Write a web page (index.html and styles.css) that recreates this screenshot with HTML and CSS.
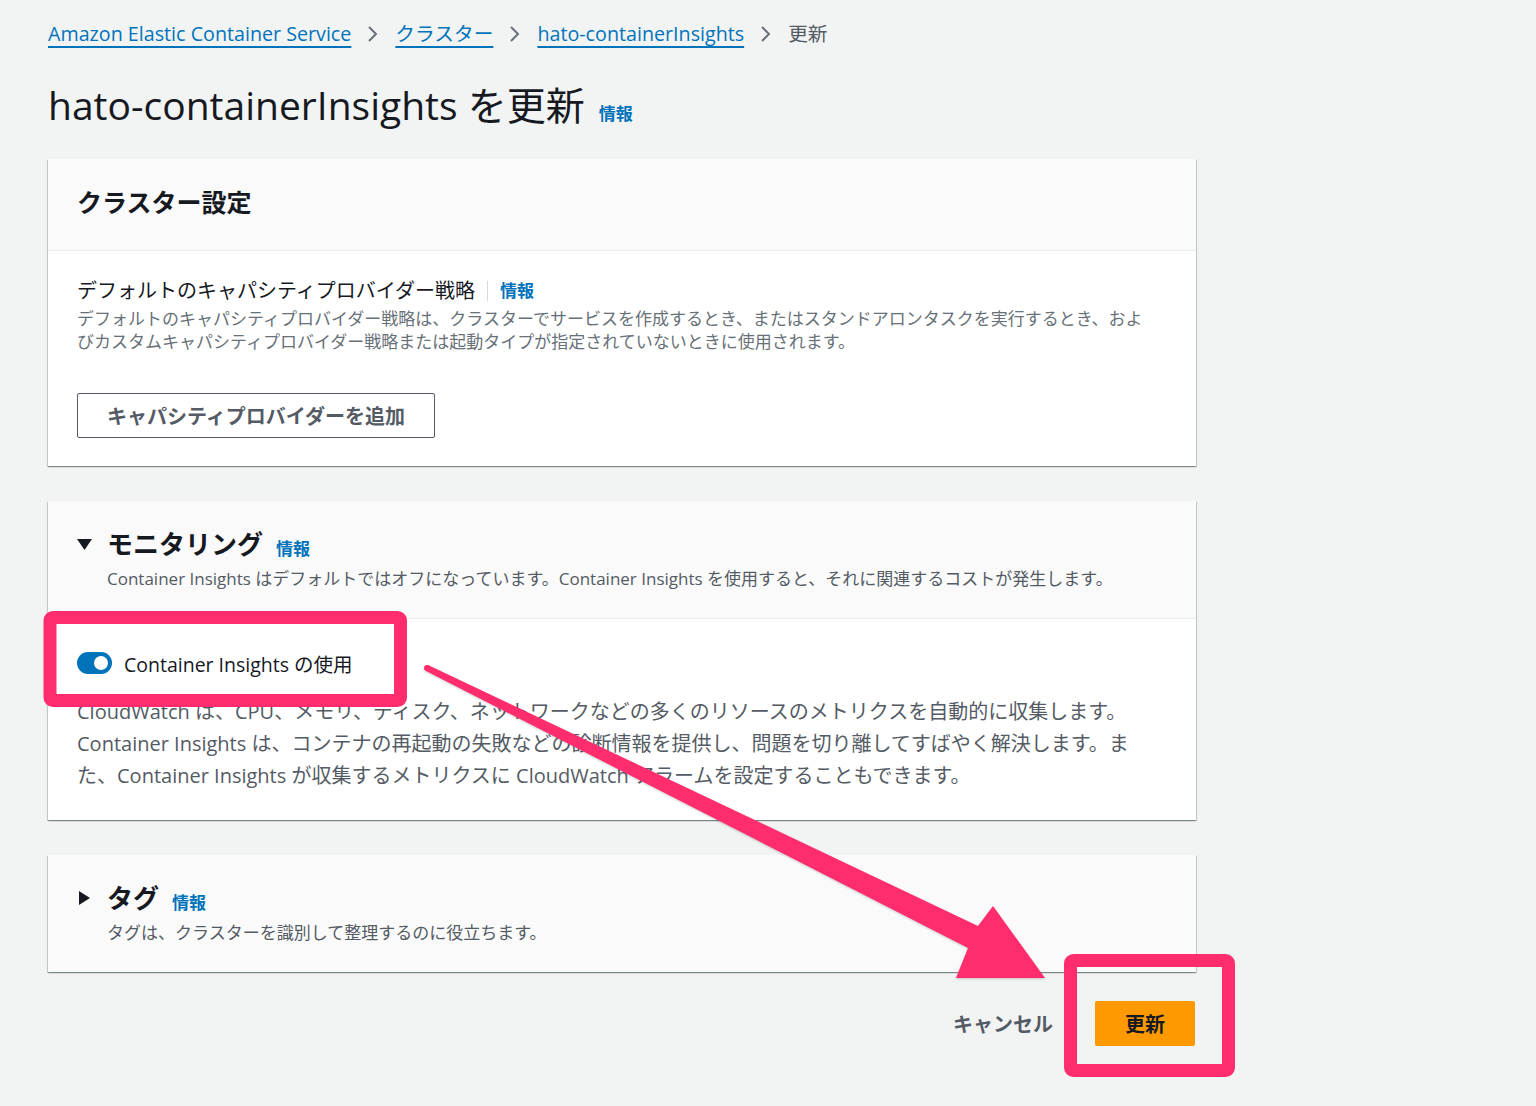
FILE: index.html
```html
<!DOCTYPE html>
<html lang="ja">
<head>
<meta charset="UTF-8">
<title>hato-containerInsights を更新</title>
<link rel="stylesheet" href="styles.css">
</head>
<body>
<div class="page">
	<!-- パンくず -->
	<nav class="crumbs">
		<a href="#">Amazon Elastic Container Service</a>
		<span class="sep"><svg width="13" height="18" viewBox="0 0 13 18"><path d="M3 2l7 7-7 7" fill="none" stroke="#687078" stroke-width="2"/></svg></span>
		<a href="#">クラスター</a>
		<span class="sep"><svg width="13" height="18" viewBox="0 0 13 18"><path d="M3 2l7 7-7 7" fill="none" stroke="#687078" stroke-width="2"/></svg></span>
		<a href="#">hato-containerInsights</a>
		<span class="sep"><svg width="13" height="18" viewBox="0 0 13 18"><path d="M3 2l7 7-7 7" fill="none" stroke="#687078" stroke-width="2"/></svg></span>
		<span class="current">更新</span>
	</nav>

	<h1 class="title">hato-containerInsights を更新 <a class="info" href="#">情報</a></h1>

	<!-- クラスター設定 -->
	<section class="card">
		<div class="card-head">
			<h2>クラスター設定</h2>
		</div>
		<div class="card-body">
			<div class="field-label">デフォルトのキャパシティプロバイダー戦略<span class="bar"></span><a class="info" href="#">情報</a></div>
			<p class="field-desc">デフォルトのキャパシティプロバイダー戦略は、クラスターでサービスを作成するとき、またはスタンドアロンタスクを実行するとき、およびカスタムキャパシティプロバイダー戦略または起動タイプが指定されていないときに使用されます。</p>
			<button class="btn" type="button">キャパシティプロバイダーを追加</button>
		</div>
	</section>

	<!-- モニタリング -->
	<section class="card">
		<div class="card-head expand">
			<div class="expand-title">
				<svg class="caret" width="15" height="12" viewBox="0 0 15 12"><polygon points="0,1 15,1 7.5,12" fill="#16191f"/></svg>
				<h2>モニタリング</h2>
				<a class="info" href="#">情報</a>
			</div>
			<p class="head-desc">Container Insights はデフォルトではオフになっています。Container Insights を使用すると、それに関連するコストが発生します。</p>
		</div>
		<div class="card-body monitor">
			<label class="switch-row">
				<span class="switch"><span class="knob"></span></span>
				Container Insights の使用
			</label>
			<p class="switch-desc">CloudWatch は、CPU、メモリ、ディスク、ネットワークなどの多くのリソースのメトリクスを自動的に収集します。Container Insights は、コンテナの再起動の失敗などの診断情報を提供し、問題を切り離してすばやく解決します。また、Container Insights が収集するメトリクスに CloudWatch アラームを設定することもできます。</p>
		</div>
	</section>

	<!-- タグ -->
	<section class="card">
		<div class="card-head expand closed">
			<div class="expand-title">
				<svg class="caret" width="15" height="14" viewBox="0 0 15 14"><polygon points="2,0 13,7 2,14" fill="#16191f"/></svg>
				<h2>タグ</h2>
				<a class="info" href="#">情報</a>
			</div>
			<p class="head-desc">タグは、クラスターを識別して整理するのに役立ちます。</p>
		</div>
	</section>

	<div class="actions">
		<button class="cancel" type="button">キャンセル</button>
		<button class="primary" type="button">更新</button>
	</div>

	<!-- 注釈（ピンクの枠と矢印） -->
	<svg class="marks" width="1536" height="1106" viewBox="0 0 1536 1106">
		<g fill="none" stroke="#ff2d6d" stroke-width="13" stroke-linejoin="round">
			<rect x="50" y="617.5" width="350.5" height="83" rx="3"/>
			<rect x="1070.5" y="960.5" width="158" height="110" rx="3"/>
		</g>
		<g fill="#ff2d6d" class="arrow">
			<circle cx="427" cy="668" r="3"/>
			<polygon points="428,665 978,926 993,906 1045,978 956,978 968,948 426,671"/>
		</g>
	</svg>
</div>
</body>
</html>
```

FILE: styles.css
```css
body {
	margin: 0;
	background-color: #f2f3f3;
	font-family: "Open Sans", "Noto Sans CJK JP", sans-serif;
	color: #16191f;
}

.page {
	position: relative;
	width: 1148px;
	min-height: 1040px;
	padding: 21px 48px 45px;
}

/* パンくず */
.crumbs {
	display: flex;
	align-items: center;
	font-size: 19.7px;
	line-height: 26px;
}

.crumbs a {
	color: #0073bb;
	text-decoration: underline;
	text-decoration-thickness: 2px;
	text-underline-offset: 5px;
}

.sep {
	display: flex;
	margin: 0 16px 0 15px;
}

.current {
	color: #545b64;
}

.title {
	margin: 34px 0 21px;
	font-size: 39px;
	font-weight: 400;
	line-height: 48px;
}

.info {
	color: #0073bb;
	font-size: 17px;
	font-weight: 700;
	text-decoration: none;
}

.title .info {
	margin-left: 4px;
}

/* カード */
.card {
	background-color: #fff;
	box-shadow: 0 1px 1px 0 rgba(0, 28, 36, 0.3), 1px 1px 1px 0 rgba(0, 28, 36, 0.15), -1px 1px 1px 0 rgba(0, 28, 36, 0.15);
	margin-bottom: 35px;
}

.card-head {
	background-color: #fafafa;
	border-bottom: 1px solid #eaeded;
	padding: 24px 29px 29px;
}

.card-head h2 {
	margin: 0;
	font-size: 25px;
	font-weight: 700;
	line-height: 38px;
}

.card-body {
	padding: 26px 29px 28px;
}

.field-label {
	display: flex;
	align-items: center;
	font-size: 20px;
	line-height: 28px;
}

.bar {
	width: 1px;
	height: 20px;
	background-color: #d5dbdb;
	margin: 0 12px;
}

.field-desc {
	max-width: 1082px;
	margin: 2px 0 0;
	font-size: 17px;
	line-height: 23px;
	color: #687078;
}

.btn {
	margin-top: 40px;
	height: 45px;
	padding: 0 29px;
	background-color: #fff;
	border: 1px solid #545b64;
	border-radius: 2px;
	font-family: inherit;
	font-size: 20px;
	font-weight: 700;
	color: #545b64;
}

/* 展開セクション */
.card-head.expand {
	padding: 25px 29px 28px;
}

.card-head.closed {
	border-bottom: none;
}

.expand-title {
	display: flex;
	align-items: center;
	height: 36px;
}

.caret {
	margin-right: 15px;
}

.expand-title h2 {
	font-size: 26px;
	line-height: 36px;
	margin-right: 13px;
}

.expand-title .info {
	margin-top: 6px;
}

.head-desc {
	margin: 5px 0 0 30px;
	font-size: 17px;
	line-height: 23px;
	color: #545b64;
}

.monitor {
	padding-top: 30px;
}

.switch-row {
	display: flex;
	align-items: center;
	height: 28px;
	font-size: 19.5px;
}

.switch {
	position: relative;
	width: 35px;
	height: 22px;
	border-radius: 11px;
	background-color: #0073bb;
	margin-right: 12px;
}

.knob {
	position: absolute;
	top: 4px;
	right: 4px;
	width: 14px;
	height: 14px;
	border-radius: 50%;
	background-color: #fff;
}

.switch-desc {
	max-width: 1070px;
	margin: 19px 0 0;
	font-size: 20px;
	line-height: 32px;
	color: #545b64;
}

/* ボタン */
.actions {
	display: flex;
	justify-content: flex-end;
	align-items: center;
	margin-top: -6px;
	padding-right: 1px;
}

.cancel {
	background: none;
	border: none;
	padding: 0;
	margin-right: 42px;
	font-family: inherit;
	font-size: 20px;
	font-weight: 700;
	color: #545b64;
}

.primary {
	width: 100px;
	height: 45px;
	background-color: #ff9900;
	border: none;
	border-radius: 2px;
	font-family: inherit;
	font-size: 20px;
	font-weight: 700;
	color: #16191f;
}

/* 注釈 */
.marks {
	position: absolute;
	top: 0;
	left: 0;
	pointer-events: none;
}

.arrow {
	filter: drop-shadow(0 1px 1px rgba(0, 0, 0, 0.2));
}
```
